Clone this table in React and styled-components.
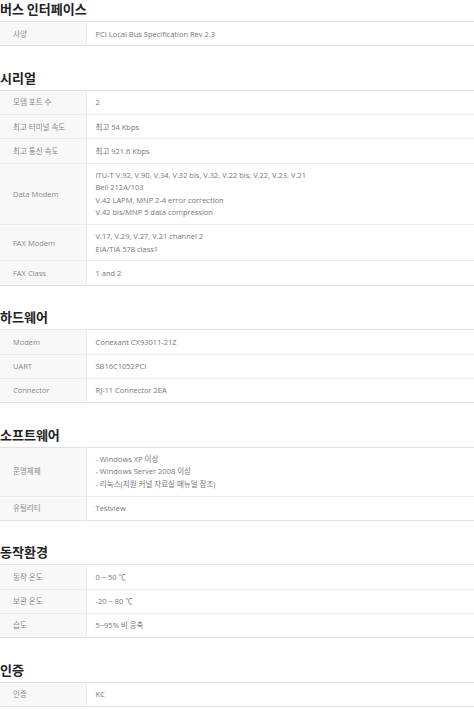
import React from 'react';
import styled, { createGlobalStyle } from 'styled-components';

const sections = [
    {
        title: '버스 인터페이스',
        rows: [
            ['사양', ['PCI Local Bus Specification Rev 2.3']],
        ],
    },
    {
        title: '시리얼',
        rows: [
            ['모뎀 포트 수', ['2']],
            ['최고 터미널 속도', ['최고 54 Kbps']],
            ['최고 통신 속도', ['최고 921.6 Kbps']],
            ['Data Modem', [
                'ITU-T V.92, V.90, V.34, V.32 bis, V.32, V.22 bis, V.22, V.23, V.21',
                'Bell 212A/103',
                'V.42 LAPM, MNP 2-4 error correction',
                'V.42 bis/MNP 5 data compression',
            ]],
            ['FAX Modem', ['V.17, V.29, V.27, V.21 channel 2', 'EIA/TIA 578 class1']],
            ['FAX Class', ['1 and 2']],
        ],
    },
    {
        title: '하드웨어',
        rows: [
            ['Modem', ['Conexant CX93011-21Z']],
            ['UART', ['SB16C1052PCI']],
            ['Connector', ['RJ-11 Connector 2EA']],
        ],
    },
    {
        title: '소프트웨어',
        rows: [
            ['운영체제', ['- Windows XP 이상', '- Windows Server 2008 이상', '- 리눅스(지원 커널 자료실 매뉴얼 참조)']],
            ['유틸리티', ['Testview']],
        ],
    },
    {
        title: '동작환경',
        rows: [
            ['동작 온도', ['0 ~ 50 ℃']],
            ['보관 온도', ['-20 ~ 80 ℃']],
            ['습도', ['5~95% 비 응축']],
        ],
    },
    {
        title: '인증',
        rows: [
            ['인증', ['KC']],
        ],
    },
];

export default function App () {

    return (
        <Page>
            <GlobalStyle />
            {
                sections.map(s => {
                    return (
                        <Section key={s.title}>
                            <Heading>{s.title}</Heading>
                            <SpecTable>
                                <tbody>
                                    {
                                        s.rows.map(r => {
                                            return (
                                                <tr key={r[0]}>
                                                    <Label>{r[0]}</Label>
                                                    <Value>
                                                        {r[1].map(line => <div key={line}>{line}</div>)}
                                                    </Value>
                                                </tr>
                                            )
                                        })
                                    }
                                </tbody>
                            </SpecTable>
                        </Section>
                    )
                })
            }
        </Page>
    )

}

const GlobalStyle = createGlobalStyle`
    html, body {
        margin: 0;
        padding: 0;
        background: #fff;
    }
`;

const Page = styled.div`
    width: 474px;
    font-family: "Open Sans", "Noto Sans CJK KR", sans-serif;
`;

const Section = styled.section`
    margin-bottom: 22.5px;
`;

const Heading = styled.h2`
    margin: 0 0 4px;
    font-family: "Noto Sans CJK KR", sans-serif;
    font-size: 13px;
    line-height: 17px;
    font-weight: 700;
    color: #222;
`;

const SpecTable = styled.table`
    width: 100%;
    border-collapse: collapse;
    border-top: 1px solid #e2e2e2;
    border-bottom: 1px solid #e2e2e2;
    font-size: 7.5px;
    line-height: 12.3px;

    tr + tr {
        border-top: 1px solid #ececec;
    }
`;

const Label = styled.th`
    width: 86px;
    box-sizing: border-box;
    padding: 5.5px 6px 5.5px 13px;
    background: #f8f8f8;
    border-right: 1px solid #ececec;
    color: #888;
    font-weight: 400;
    text-align: left;
    vertical-align: middle;
`;

const Value = styled.td`
    padding: 5.5px 9px;
    color: #777;
    vertical-align: middle;
`;
